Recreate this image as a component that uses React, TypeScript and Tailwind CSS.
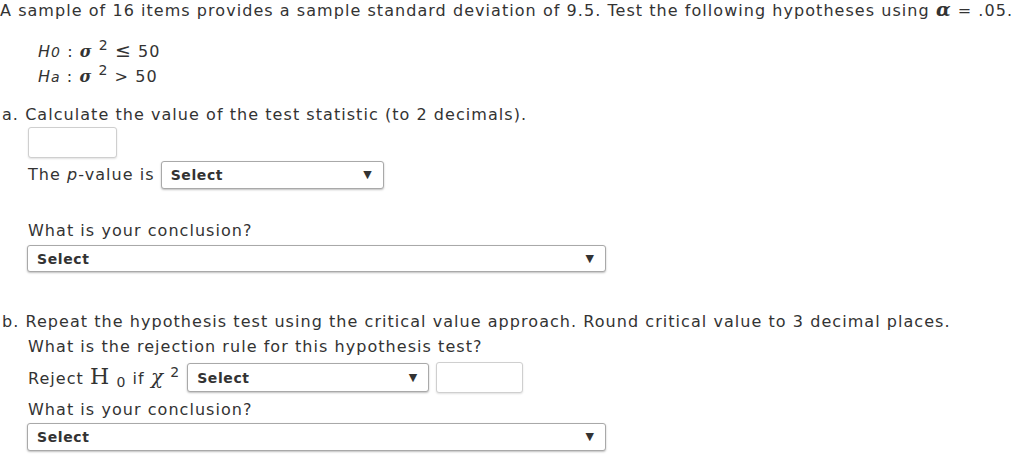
import React from "react";

function Sel({ w, h = 28 }: { w: string; h?: number }) {
  return (
    <div
      className={`${w} flex items-center justify-between rounded-[3px] border border-[#a9a9a9] bg-white pl-[9px] pr-[10px] shadow-[0_1px_2px_rgba(0,0,0,0.25)]`}
      style={{ height: h }}
    >
      <span className="text-[14px] font-bold text-[#333] tracking-[0.6px]">Select</span>
      <span className="text-[11px] text-[#333]">▼</span>
    </div>
  );
}

function Box({ w }: { w: string }) {
  return <div className={`${w} h-[31px] rounded-[3px] border border-[#cfcfcf] bg-white shadow-[0_1px_2px_rgba(0,0,0,0.12)]`} />;
}

const serif = { fontFamily: "'DejaVu Serif', serif" };

export default function App() {
  return (
    <div
      className="w-[1024px] h-[458px] bg-white text-[#333] text-[16px] leading-[20px] tracking-[1.05px]"
      style={{ fontFamily: "Verdana, 'DejaVu Sans', sans-serif" }}
    >
      <div className="leading-[19px] whitespace-nowrap">
        A sample of 16 items provides a sample standard deviation of 9.5. Test the following hypotheses using{" "}
        <span className="italic font-bold text-[19px] leading-none" style={serif}>α</span> = .05.
      </div>
      <div className="pl-[38px] mt-[20px] h-[27px]">
        <i>H</i><i className="text-[14px]">0</i> : <i className="font-bold" style={serif}>σ</i>{" "}
        <sup className="text-[14px]">2</sup> <span className="text-[19px]">≤</span> 50
      </div>
      <div className="pl-[38px] h-[28px]">
        <i>H</i><i className="text-[14px]">a</i> : <i className="font-bold" style={serif}>σ</i>{" "}
        <sup className="text-[14px]">2</sup> &gt; 50
      </div>
      <div className="pl-[2px] mt-[10px] h-[22px]">a. Calculate the value of the test statistic (to 2 decimals).</div>
      <div className="pl-[28px]">
        <Box w="w-[89px]" />
      </div>
      <div className="pl-[28px] mt-[3px] flex items-center gap-[6px]">
        <span>
          The <i>p</i>-value is
        </span>
        <Sel w="w-[223px]" />
      </div>
      <div className="pl-[28px] mt-[32px] h-[24px]">What is your conclusion?</div>
      <div className="pl-[27px]">
        <Sel w="w-[579px]" h={27} />
      </div>
      <div className="pl-[2px] mt-[40px] h-[25px] whitespace-nowrap">
        b. Repeat the hypothesis test using the critical value approach. Round critical value to 3 decimal places.
      </div>
      <div className="pl-[28px] h-[24px]">What is the rejection rule for this hypothesis test?</div>
      <div className="pl-[28px] mt-[1px] flex items-center">
        <span className="mr-[7px] whitespace-nowrap">
          Reject <span className="text-[22px]" style={serif}>H</span>{" "}
          <span className="text-[14px] relative top-[3px]">0</span> if{" "}
          <i className="text-[20px]" style={serif}>χ</i>{" "}
          <sup className="text-[14px]">2</sup>
        </span>
        <Sel w="w-[242px]" h={29} />
        <div className="ml-[7px]">
          <Box w="w-[87px]" />
        </div>
      </div>
      <div className="pl-[28px] mt-[7px] h-[23px]">What is your conclusion?</div>
      <div className="pl-[27px]">
        <Sel w="w-[579px]" h={28} />
      </div>
    </div>
  );
}
